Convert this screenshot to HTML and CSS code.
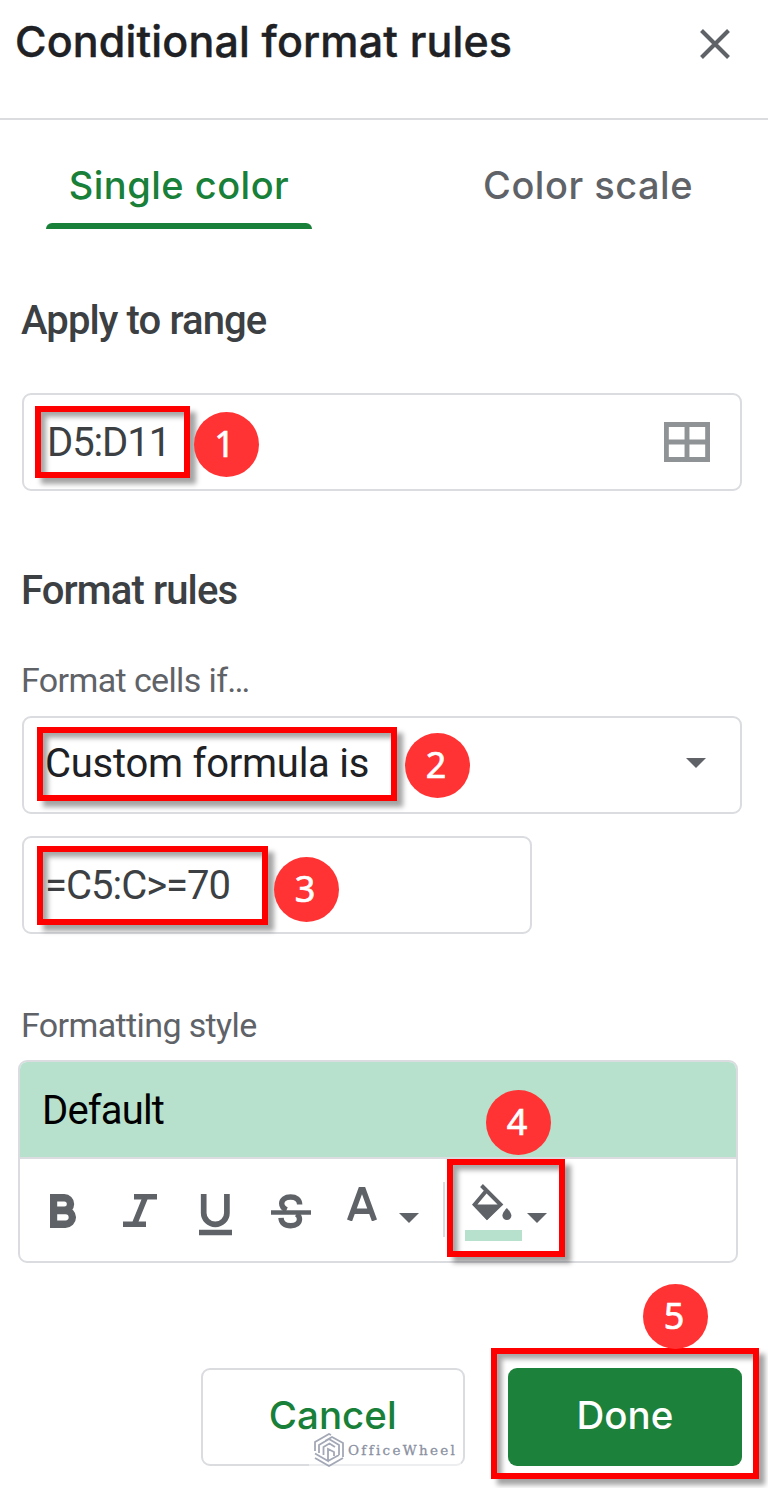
FILE: index.html
```html
<!DOCTYPE html>
<html lang="en">
<head>
<meta charset="utf-8">
<title>Conditional format rules</title>
<link rel="stylesheet" href="styles.css">
</head>
<body>
<main class="panel">
  <header class="header">
    <h1 class="title">Conditional format rules</h1>
    <svg class="close" viewBox="0 0 32 32"><path d="M2.5 2.5 29.5 29.5M29.5 2.5 2.5 29.5"/></svg>
  </header>
  <nav class="tabs">
    <div class="tab tab-active"><span class="tab-one">Single color</span></div>
    <div class="tab"><span class="tab-two">Color scale</span></div>
  </nav>

  <section class="range">
    <h2 class="heading heading-range">Apply to range</h2>
    <div class="field">
      <span class="range-text">D5:D11</span>
      <svg class="grid-icon" viewBox="0 0 44 38"><path d="M2.25 2.25h39.5v33.5H2.25zM22 2v34M2 19h40"/></svg>
      <i class="mark mark-1"></i><b class="badge badge-1">1</b>
    </div>
  </section>

  <section class="rules">
    <h2 class="heading heading-rules">Format rules</h2>
    <p class="label label-if">Format cells if…</p>
    <div class="field field-select">
      <span class="select-text">Custom formula is</span>
      <svg class="caret caret-select" viewBox="0 0 20 10"><path d="M0 0h20L10 10z"/></svg>
      <i class="mark mark-2"></i><b class="badge badge-2">2</b>
    </div>
    <div class="field field-formula">
      <span class="formula-text">=C5:C&gt;=70</span>
      <i class="mark mark-3"></i><b class="badge badge-3">3</b>
    </div>
  </section>

  <section class="style">
    <p class="label label-style">Formatting style</p>
    <div class="card">
      <div class="preview"><span class="preview-text">Default</span></div>
      <div class="tools">
        <svg class="tool tool-b" viewBox="0 0 27 33"><path d="M3.5 3.3h10.8a6.2 6.2 0 0 1 0 12.4H3.5zM3.5 16h12a6.8 6.8 0 0 1 0 13.7h-12z"/></svg>
        <svg class="tool tool-i" viewBox="0 0 34 33"><path d="M11 2.7h23M0 30.3h23M22.5 3 11.5 30"/></svg>
        <svg class="tool tool-u" viewBox="0 0 33 42"><path class="u-bowl" d="M4.7 0v19a11.6 11.4 0 0 0 23.2 0V0"/><path d="M0 38.5h33"/></svg>
        <svg class="tool tool-s" viewBox="0 0 40 36"><path d="M28.7 10.5C28.5 5.5 25 3 19.6 3 14 3 10.7 5.7 10.7 9.6c0 3.2 2 5 5 6.2M25.5 20c2 1.3 3 2.9 3 5.1 0 4-3.3 6.7-8.8 6.7-6 0-9.500-3-9.700-8"/><path class="s-line" d="M0 18.500h40"/></svg>
        <svg class="tool tool-a" viewBox="0 0 30 34"><path d="M2.500 33.500 14 2h2l11.500 31.500M7 24.200h16"/></svg>
        <svg class="caret caret-text" viewBox="0 0 20 10"><path d="M0 0h20L10 10z"/></svg>
        <span class="divider"></span>
        <span class="fill">
          <svg class="bucket" viewBox="0 0 40 37"><path class="bucket-line" d="m9.500 1.500 5 5M14.500 6.500 2.800 20.500 15 33.500 28.500 20.500z"/><path d="M0 20.500h30L15 36z"/><path d="M34.800 24s4.600 4.500 4.600 7.600a4.500 4.500 0 0 1-9 0c0-3.100 4.400-7.600 4.400-7.600z"/></svg>
          <span class="swatch"></span>
        </span>
        <svg class="caret caret-fill" viewBox="0 0 20 10"><path d="M0 0h20L10 10z"/></svg>
      </div>
      <i class="mark mark-4"></i><b class="badge badge-4">4</b>
    </div>
  </section>

  <footer class="actions">
    <button class="btn cancel"><span>Cancel</span></button>
    <button class="btn done"><span>Done</span></button>
    <i class="mark mark-5"></i><b class="badge badge-5">5</b>
    <div class="watermark">
      <svg class="logo" viewBox="0 0 30 34"><path d="M1 18V9L15 1l2 1M11 8l7-4 11 6v14M5 20v-8l10-6 10 6v10M1 20.500l13 7.500V16l6 3v4M9.500 22v-8l6-3.500 5.500 3.500M1 25l14 8 14-8M14 28l11-6"/></svg>
      <span class="brand">OfficeWheel</span>
    </div>
  </footer>
</main>
</body>
</html>
```
FILE: styles.css
```css
* { box-sizing: border-box; }
body { margin: 0; background: #fff; }
h1, h2, p { margin: 0; }
.panel { width: 768px; height: 1488px; overflow: hidden; font-family: Roboto, sans-serif; color: #3c4043; }

.header { display: flex; justify-content: space-between; align-items: flex-start; height: 120px; padding: 11px 37px 0 15px; border-bottom: 2px solid #dadce0; }
.title { font: 500 43px/60px Inter, sans-serif; letter-spacing: 0.15px; color: #202124; white-space: nowrap; -webkit-text-stroke: 0.4px #202124; }
.close { width: 32px; height: 32px; margin-top: 17px; fill: none; stroke: #5f6368; stroke-width: 4.1; }

.tabs { display: flex; justify-content: space-between; height: 109px; padding: 0 46px; font: 500 38px/50px Inter, sans-serif; color: #5f6368; }
.tab { display: flex; justify-content: center; width: 266px; padding-top: 40px; white-space: nowrap; }
.tab:last-child { width: 268px; }
.tab-active { color: #188038; position: relative; }
.tab-active::after { content: ""; position: absolute; left: 0; bottom: 0; width: 266px; height: 6.5px; border-radius: 6px 6px 0 0; background: #188038; }
.tab-one, .tab-two { letter-spacing: 0.5px; }

.heading { font: 500 40px/50px Roboto, sans-serif; letter-spacing: -0.88px; padding-left: 21px; white-space: nowrap; }
.heading-range { margin-top: 67px; }
.heading-rules { margin-top: 75px; }
.field { position: relative; display: flex; align-items: center; justify-content: space-between; width: 719.5px; height: 98px; margin-left: 22px; border: 2px solid #dadce0; border-radius: 9px; font-size: 40px; line-height: 50px; white-space: nowrap; }
.range .field { margin-top: 47px; padding: 0 30px 0 23px; }
.range-text { letter-spacing: -1.1px; padding-top: 2px; }
.select-text { letter-spacing: -0.25px; padding-top: 2px; }
.formula-text { letter-spacing: -1px; padding-top: 2px; }
.grid-icon { width: 46px; height: 40px; fill: none; stroke: #8f9396; stroke-width: 4.7; }
.label { font-size: 34px; line-height: 44px; letter-spacing: -0.62px; padding-left: 21px; color: #5f6368; white-space: nowrap; }
.label-if { margin-top: 42px; }
.field-select { margin-top: 14px; padding: 0 34px 5px 21px; color: #202124; }
.field-formula { width: 510px; margin-top: 22px; padding-left: 21px; }
.caret { width: 20px; height: 10px; fill: #5f6368; flex: none; }

.label-style { margin-top: 69px; }
.card { position: relative; width: 720px; height: 203px; margin: 13px 0 0 18px; border: 2px solid #dadce0; border-radius: 9px; }
.preview { height: 97px; padding: 24px 0 0 22px; background: #b7e1cd; border-bottom: 2px solid #dadce0; border-radius: 7px 7px 0 0; font-size: 40px; line-height: 50px; letter-spacing: -0.85px; color: #000; }
.tools { display: flex; align-items: flex-start; height: 102px; padding-left: 30px; }
.tool { fill: none; stroke: #5f6368; stroke-width: 5; flex: none; }
.tool-b { width: 27px; height: 34px; margin-top: 35px; stroke-width: 7.4; }
.tool-i { width: 34px; height: 33px; margin: 35px 0 0 46px; stroke-width: 5.6; }
.tool-u { width: 33px; height: 42px; margin: 35px 0 0 42px; stroke-width: 5.7; }
.tool-s { width: 40px; height: 36px; margin: 35px 0 0 39px; stroke-width: 5.4; }
.s-line { stroke-width: 4.7; }
.tool-a { width: 30px; height: 34px; margin: 28px 0 0 36px; stroke-width: 5.4; }
.caret-text { margin: 54px 0 0 22px; }
.divider { width: 2px; height: 55px; margin: 23px 0 0 24px; background: #dadce0; }
.fill { display: flex; flex-direction: column; width: 57px; margin: 25px 0 0 20px; }
.bucket { width: 40px; height: 37px; margin-left: 7px; fill: #5f6368; }
.bucket-line { fill: none; stroke: #5f6368; stroke-width: 4; }
.swatch { height: 11px; margin-top: 9px; background: #b7e1cd; }
.caret-fill { margin: 54px 0 0 5px; }

.actions { position: relative; display: flex; gap: 43.5px; margin: 105px 0 0 201px; width: 567px; height: 120px; }
.btn { height: 98px; padding: 0 0 4px; border-radius: 9px; font: 500 38.5px/50px Inter, sans-serif; }
.cancel { width: 263.5px; background: #fff; border: 2px solid #dadce0; color: #188038; }
.done { width: 234px; border: 0; background: #1c813a; color: #fff; }

.mark { position: absolute; border: 6.5px solid #f00; box-shadow: 6px 6px 5px rgba(0,0,0,.36), inset 5px 5px 5px rgba(0,0,0,.35); }
.mark-1 { left: 11px; top: 11px; width: 155px; height: 72px; }
.mark-2 { left: 13px; top: 9px; width: 360px; height: 74px; }
.mark-3 { left: 13px; top: 8px; width: 231px; height: 79px; }
.mark-4 { left: 427px; top: 97px; width: 118px; height: 98px; }
.mark-5 { left: 290px; top: -20px; width: 268px; height: 131px; }
.badge { position: absolute; width: 65px; height: 65px; border-radius: 50%; background: #f33; color: #fff; font: 400 36px/63px "Noto Sans", sans-serif; text-align: center; padding-right: 3px; -webkit-text-stroke: 0.7px #fff; }
.badge-1 { left: 169.5px; top: 16.5px; }
.badge-2 { left: 381px; top: 14.5px; }
.badge-3 { left: 250px; top: 18.5px; }
.badge-4 { left: 466px; top: 28px; }
.badge-5 { left: 442px; top: -84px; }

.watermark { position: absolute; left: 108px; top: 63px; display: flex; align-items: center; width: 152px; height: 38px; padding-left: 5px; background: rgba(255,255,255,.5); }
.logo { width: 30px; height: 34px; fill: none; stroke: #a3a8b6; stroke-width: 1.8; flex: none; }
.brand { margin-left: 4px; font: 400 13.5px/20px "DejaVu Serif", serif; letter-spacing: 2.3px; color: #8b91a2; -webkit-text-stroke: 0.3px #8b91a2; }
```
